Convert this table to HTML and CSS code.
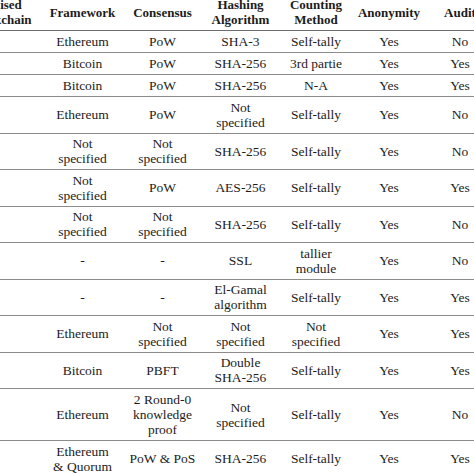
FILE: index.html
```html
<!DOCTYPE html>
<html>
<head>
<meta charset="utf-8">
<link rel="stylesheet" href="styles.css">
</head>
<body>
<div class="viewport">
<table class="cmp">
<colgroup>
<col class="c0"><col class="c1"><col class="c2"><col class="c3"><col class="c4"><col class="c5"><col class="c6">
</colgroup>
<thead>
<tr><th>Utilised<br>Blockchain</th><th>Framework</th><th>Consensus</th><th>Hashing<br>Algorithm</th><th>Counting<br>Method</th><th>Anonymity</th><th>Audit</th></tr>
</thead>
<tbody>
<tr><td></td><td>Ethereum</td><td>PoW</td><td>SHA-3</td><td>Self-tally</td><td>Yes</td><td>No</td></tr>
<tr><td></td><td>Bitcoin</td><td>PoW</td><td>SHA-256</td><td>3rd partie</td><td>Yes</td><td>Yes</td></tr>
<tr><td></td><td>Bitcoin</td><td>PoW</td><td>SHA-256</td><td>N-A</td><td>Yes</td><td>Yes</td></tr>
<tr class="two"><td></td><td>Ethereum</td><td>PoW</td><td>Not<br>specified</td><td>Self-tally</td><td>Yes</td><td>No</td></tr>
<tr class="two"><td></td><td>Not<br>specified</td><td>Not<br>specified</td><td>SHA-256</td><td>Self-tally</td><td>Yes</td><td>No</td></tr>
<tr class="two"><td></td><td>Not<br>specified</td><td>PoW</td><td>AES-256</td><td>Self-tally</td><td>Yes</td><td>Yes</td></tr>
<tr class="two"><td></td><td>Not<br>specified</td><td>Not<br>specified</td><td>SHA-256</td><td>Self-tally</td><td>Yes</td><td>No</td></tr>
<tr class="two"><td></td><td>-</td><td>-</td><td>SSL</td><td>tallier<br>module</td><td>Yes</td><td>No</td></tr>
<tr class="two"><td></td><td>-</td><td>-</td><td>El-Gamal<br>algorithm</td><td>Self-tally</td><td>Yes</td><td>Yes</td></tr>
<tr class="two"><td></td><td>Ethereum</td><td>Not<br>specified</td><td>Not<br>specified</td><td>Not<br>specified</td><td>Yes</td><td>Yes</td></tr>
<tr class="two"><td></td><td>Bitcoin</td><td>PBFT</td><td>Double<br>SHA-256</td><td>Self-tally</td><td>Yes</td><td>Yes</td></tr>
<tr><td></td><td>Ethereum</td><td>2 Round-0<br>knowledge<br>proof</td><td>Not<br>specified</td><td>Self-tally</td><td>Yes</td><td>No</td></tr>
<tr class="two"><td></td><td>Ethereum<br>&amp; Quorum</td><td>PoW &amp; PoS</td><td>SHA-256</td><td>Self-tally</td><td>Yes</td><td>Yes</td></tr>
</tbody>
</table>
</div>
</body>
</html>
```

FILE: styles.css
```css
html, body {
  margin: 0;
  padding: 0;
  background: #ffffff;
}
.viewport {
  width: 474px;
  height: 474px;
  overflow: hidden;
}
.cmp {
  margin-top: -6px;
  margin-left: -41px;
  border-collapse: collapse;
  table-layout: fixed;
  width: 536px;
  font-family: "Liberation Serif", "Times New Roman", serif;
  font-size: 13.5px;
  line-height: 15px;
  color: #1c1c1c;
}
.c0 { width: 83px; }
.c1 { width: 81px; }
.c2 { width: 79px; }
.c3 { width: 77px; }
.c4 { width: 74px; }
.c5 { width: 72px; }
.c6 { width: 70px; }
.cmp th, .cmp td {
  padding: 3px 0;
  text-align: center;
  vertical-align: middle;
  white-space: nowrap;
}
.cmp tr.two td {
  padding: 2.75px 0;
}
.cmp th {
  font-weight: bold;
  font-size: 13px;
  border-bottom: 1px solid #6e6e6e;
}
.cmp tbody tr {
  border-top: 1px solid #8c8c8c;
}
.cmp tbody tr:first-child {
  border-top: 1px solid #6e6e6e;
}
```
